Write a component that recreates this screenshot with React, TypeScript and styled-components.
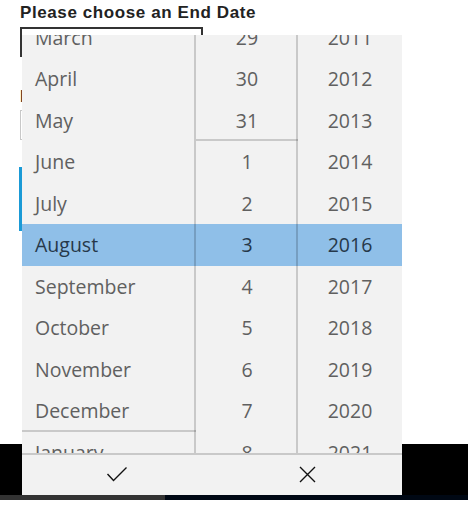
import React from "react";
import styled, { createGlobalStyle } from "styled-components";

const GlobalStyle = createGlobalStyle`
  html, body {
    margin: 0;
    padding: 0;
    background: #ffffff;
  }
  * {
    box-sizing: border-box;
  }
`;

const ROW = 41.5;

const Page = styled.div`
  position: relative;
  display: flex;
  flex-direction: column;
  height: 507px;
  padding: 3px 0 0 20px;
  font-family: "Liberation Sans", Arial, sans-serif;
  overflow: hidden;
`;

const FieldLabel = styled.div`
  font-size: 17px;
  line-height: 20px;
  letter-spacing: 0.6px;
  font-weight: bold;
  color: #222;
  white-space: nowrap;
`;

const TextBox = styled.div<{ muted?: boolean; gap: number }>`
  width: 183px;
  height: 30px;
  margin-top: ${(p) => p.gap}px;
  border: ${(p) => (p.muted ? "1px solid #c8c8c8" : "2px solid #333")};
  background: #fff;
`;

const SecondLabel = styled(FieldLabel)`
  margin-top: 30px;
`;

const FocusBar = styled.div`
  width: 183px;
  height: 64px;
  margin: 27px 0 0 -1px;
  border-left: 3px solid #1a9ad6;
`;

const AppBar = styled.div`
  margin: auto 0 7px -20px;
  width: 468px;
  height: 56px;
  background: #000;
  display: flex;
  flex-direction: column;
  justify-content: flex-end;
`;

const Progress = styled.div`
  display: flex;
  height: 5px;
  background: #000814;
`;

const ProgressFill = styled.div`
  width: 165px;
  background: #333;
`;

/* flyout picker, sits over the form */
const Picker = styled.div`
  position: absolute;
  left: 22px;
  top: 35px;
  width: 380px;
  height: 460px;
  background: #f2f2f2;
  display: flex;
  flex-direction: column;
  font-family: "Open Sans", "Noto Sans", sans-serif;
`;

const Columns = styled.div`
  flex: 1;
  display: flex;
  overflow: hidden;
`;

const Column = styled.div<{ width: number; divider?: boolean; align: "left" | "center" }>`
  position: relative;
  width: ${(p) => p.width}px;
  text-align: ${(p) => p.align};
  overflow: hidden;

  &::after {
    content: "";
    display: ${(p) => (p.divider ? "block" : "none")};
    position: absolute;
    top: 0;
    right: 0;
    width: 2px;
    height: 100%;
    background: rgba(0, 0, 0, 0.17);
    z-index: 1;
  }
`;

const List = styled.div`
  margin-top: -18.5px;
`;

const Item = styled.div<{ selected?: boolean; wrapEnd?: boolean; indent: number }>`
  height: ${ROW}px;
  line-height: ${ROW}px;
  padding-left: ${(p) => p.indent}px;
  font-size: 19.5px;
  color: ${(p) => (p.selected ? "#26384a" : "#606060")};
  background: ${(p) => (p.selected ? "#8fbfe8" : "transparent")};
  box-shadow: ${(p) => (p.wrapEnd ? "inset 0 -2px 0 #c9c9c9" : "none")};
  white-space: nowrap;
`;

const Footer = styled.div`
  height: 42px;
  display: flex;
  border-top: 2px solid #c9c9c9;
`;

const FooterButton = styled.button`
  flex: 1;
  border: none;
  background: transparent;
  display: flex;
  align-items: center;
  justify-content: center;
  padding: 0;
  padding-bottom: 2px;
`;

const months = [
  "March", "April", "May", "June", "July", "August",
  "September", "October", "November", "December", "January",
];
const days = ["29", "30", "31", "1", "2", "3", "4", "5", "6", "7", "8"];
const years = ["2011", "2012", "2013", "2014", "2015", "2016", "2017", "2018", "2019", "2020", "2021"];

const SELECTED = 5;

const App: React.FC = () => {
  return (
    <>
      <GlobalStyle />
      <Page>
        <FieldLabel>Please choose an End Date</FieldLabel>
        <TextBox gap={4} />
        <SecondLabel>Please choose an End Time</SecondLabel>
        <TextBox muted gap={3} />
        <FocusBar />
        <AppBar>
          <Progress>
            <ProgressFill />
          </Progress>
        </AppBar>

        <Picker>
          <Columns>
            <Column width={174} divider align="left">
              <List>
                {months.map((m, i) => (
                  <Item key={m} indent={13} selected={i === SELECTED} wrapEnd={m === "December"}>
                    {m}
                  </Item>
                ))}
              </List>
            </Column>
            <Column width={102} divider align="center">
              <List>
                {days.map((d, i) => (
                  <Item key={d} indent={0} selected={i === SELECTED} wrapEnd={d === "31"}>
                    {d}
                  </Item>
                ))}
              </List>
            </Column>
            <Column width={104} align="center">
              <List>
                {years.map((y, i) => (
                  <Item key={y} indent={0} selected={i === SELECTED}>
                    {y}
                  </Item>
                ))}
              </List>
            </Column>
          </Columns>
          <Footer>
            <FooterButton aria-label="accept">
              <svg width="22" height="16" viewBox="0 0 22 16">
                <path d="M1.5 8 L7.5 14.5 L20.5 1.5" fill="none" stroke="#111" strokeWidth="1.4" />
              </svg>
            </FooterButton>
            <FooterButton aria-label="cancel">
              <svg width="17" height="17" viewBox="0 0 17 17">
                <path d="M1 1 L16 16 M16 1 L1 16" fill="none" stroke="#111" strokeWidth="1.4" />
              </svg>
            </FooterButton>
          </Footer>
        </Picker>
      </Page>
    </>
  );
};

export default App;
